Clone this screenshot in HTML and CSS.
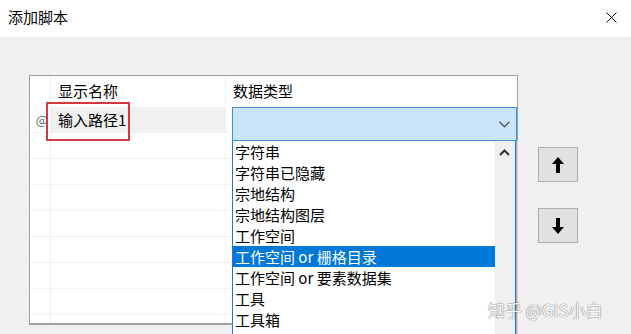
FILE: index.html
```html
<!DOCTYPE html>
<html lang="zh-CN">
<head>
  <meta charset="UTF-8" />
  <title>添加脚本</title>
  <link rel="stylesheet" href="styles.css">
</head>
<body>
  <div class="window">
    <div class="titlebar">
      <span class="title">添加脚本</span>
      <svg class="close" width="11" height="11" viewBox="0 0 11 11">
        <path d="M0.5 0.5 L10.5 10.5 M10.5 0.5 L0.5 10.5" stroke="#111" stroke-width="1" fill="none"/>
      </svg>
    </div>

    <div class="content">
      <div class="grid-frame">
        <div class="grid-head">
          <div class="cell rowhead"></div>
          <div class="cell col-name">显示名称</div>
          <div class="cell col-type">数据类型</div>
        </div>
        <div class="grid-body">
          <div class="row current">
            <div class="cell rowhead">@</div>
            <div class="cell col-name">输入路径1</div>
            <div class="cell col-type"></div>
          </div>
          <!-- empty rows -->
          <div class="row"><div class="cell rowhead"></div><div class="cell col-name"></div><div class="cell col-type"></div></div>
          <div class="row"><div class="cell rowhead"></div><div class="cell col-name"></div><div class="cell col-type"></div></div>
          <div class="row"><div class="cell rowhead"></div><div class="cell col-name"></div><div class="cell col-type"></div></div>
          <div class="row"><div class="cell rowhead"></div><div class="cell col-name"></div><div class="cell col-type"></div></div>
          <div class="row"><div class="cell rowhead"></div><div class="cell col-name"></div><div class="cell col-type"></div></div>
          <div class="row"><div class="cell rowhead"></div><div class="cell col-name"></div><div class="cell col-type"></div></div>
          <div class="row"><div class="cell rowhead"></div><div class="cell col-name"></div><div class="cell col-type"></div></div>
          <div class="row"><div class="cell rowhead"></div><div class="cell col-name"></div><div class="cell col-type"></div></div>
        </div>

        <div class="highlight-box"></div>

        <div class="combo">
          <svg class="chevron" width="11" height="7" viewBox="0 0 11 7">
            <path d="M0.5 0.8 L5.5 5.8 L10.5 0.8" stroke="#555" stroke-width="1.3" fill="none"/>
          </svg>
        </div>

        <div class="dropdown">
          <ul class="options">
            <li>字符串</li>
            <li>字符串已隐藏</li>
            <li>宗地结构</li>
            <li>宗地结构图层</li>
            <li>工作空间</li>
            <li class="selected">工作空间 or 栅格目录</li>
            <li>工作空间 or 要素数据集</li>
            <li>工具</li>
            <li>工具箱</li>
          </ul>
          <div class="scrollbar">
            <svg class="scroll-up" width="11" height="7" viewBox="0 0 11 7">
              <path d="M1 6 L5.5 1.5 L10 6" stroke="#333" stroke-width="2" fill="none"/>
            </svg>
          </div>
        </div>
      </div>

      <div class="side-buttons">
        <button class="move-btn">
          <svg width="12" height="16" viewBox="0 0 12 16">
            <path d="M6 0 L12 7 L8 7 L8 16 L4 16 L4 7 L0 7 Z" fill="#000"/>
          </svg>
        </button>
        <button class="move-btn">
          <svg width="12" height="16" viewBox="0 0 12 16">
            <path d="M6 16 L12 9 L8 9 L8 0 L4 0 L4 9 L0 9 Z" fill="#000"/>
          </svg>
        </button>
      </div>
    </div>

    <div class="watermark">知乎 @GIS小白</div>
  </div>
</body>
</html>
```

FILE: styles.css
```css
body {
  margin: 0;
  font-family: "Noto Sans CJK SC", "Noto Sans", sans-serif;
  font-size: 15px;
  color: #000;
}
.window {
  width: 631px;
  height: 334px;
  overflow: hidden;
  position: relative;
  background-color: #f0f0f0;
}
.titlebar {
  height: 37px;
  background-color: #fff;
  display: flex;
  align-items: center;
  justify-content: space-between;
  padding: 0 14px 0 8px;
}
.title {
  font-size: 15px;
  line-height: 20px;
  margin-top: -3px;
}
.close {
  margin-top: -3px;
}
.content {
  display: flex;
  padding: 38px 0 0 29px;
}
.grid-frame {
  position: relative;
  width: 487px;
  height: 247px;
  border: 1px solid #a0a0a0;
  border-bottom-width: 2px;
  background-color: #fff;
}
.grid-head {
  display: flex;
  height: 31px;
}
.grid-head .cell {
  line-height: 29px;
}
.grid-body {
  height: 216px;
  overflow: hidden;
}
.row {
  display: flex;
  height: 25px;
  border-bottom: 1px solid #f0f0f0;
}
.cell {
  box-sizing: border-box;
  white-space: nowrap;
  overflow: hidden;
}
.rowhead {
  width: 21px;
  border-right: 1px solid #ececec;
}
.col-name {
  width: 175px;
  padding-left: 7px;
  border-right: 1px solid #f0f0f0;
}
.col-type {
  flex: 1;
  padding-left: 7px;
}
.row .cell {
  line-height: 25px;
}
.row.current .rowhead {
  text-align: right;
  padding-right: 2px;
  color: #666;
  font-size: 13px;
}
.row.current .col-name {
  background-color: #f0f0f0;
}

/* red marker drawn over the first cell */
.highlight-box {
  position: absolute;
  left: 16px;
  top: 26px;
  width: 80px;
  height: 35px;
  border: 2px solid #d5383c;
}

/* combo box editor */
.combo {
  position: absolute;
  left: 202px;
  top: 31px;
  width: 285px;
  height: 34px;
  box-sizing: border-box;
  border: 1px solid #3c8fd8;
  background-color: #cce4f7;
}
.chevron {
  position: absolute;
  right: 6px;
  top: 13px;
}

/* open dropdown list */
.dropdown {
  position: absolute;
  left: 202px;
  top: 65px;
  width: 284px;
  height: 200px;
  box-sizing: border-box;
  border: 1px solid #1c7ad2;
  border-top: none;
  background-color: #fff;
  display: flex;
  box-shadow: 1px 0 0 #b0b0b0, 2px 0 0 #d4d4d4;
}
.options {
  list-style: none;
  margin: 0;
  padding: 0;
  flex: 1;
}
.options li {
  height: 21px;
  line-height: 21px;
  padding-left: 2px;
  white-space: nowrap;
}
.options li.selected {
  background-color: #0078d7;
  color: #fff;
}
.scrollbar {
  width: 20px;
  background-color: #f0f0f0;
  position: relative;
}
.scroll-up {
  position: absolute;
  left: 4px;
  top: 8px;
}

.side-buttons {
  display: flex;
  flex-direction: column;
  gap: 26px;
  padding-top: 72px;
  margin-left: 20px;
}
.move-btn {
  width: 40px;
  height: 35px;
  padding: 0;
  background-color: #e1e1e1;
  border: 1px solid #adadad;
  display: flex;
  align-items: center;
  justify-content: center;
}

.watermark {
  position: absolute;
  left: 488px;
  top: 298px;
  font-size: 17px;
  line-height: 24px;
  color: #fff;
  text-shadow: 0 0 1px rgba(0, 0, 0, 0.6), 0 0 1px rgba(0, 0, 0, 0.4);
  white-space: nowrap;
}
```
